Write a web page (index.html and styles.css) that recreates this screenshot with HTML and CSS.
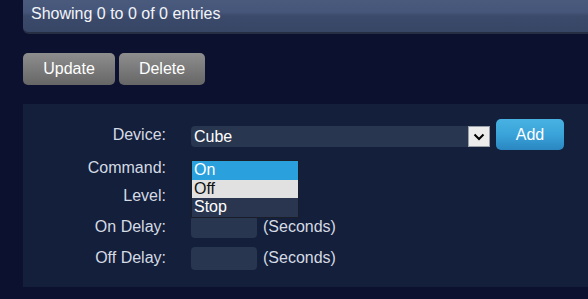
FILE: index.html
```html
<!DOCTYPE html>
<html>
<head>
<meta charset="utf-8">
<link rel="stylesheet" href="styles.css">
</head>
<body>
<div class="info-bar">Showing 0 to 0 of 0 entries</div>
<div class="actions">
  <button class="btn gray update">Update</button>
  <button class="btn gray delete">Delete</button>
</div>
<div class="panel">
  <div class="form">
    <div class="label">Device:</div>
    <div class="field">
      <div class="select">
        <span class="select-text">Cube</span>
        <span class="arrow"><svg width="12" height="8" viewBox="0 0 12 8"><path d="M1.5 1.5 L6 6 L10.5 1.5" fill="none" stroke="#000" stroke-width="2"/></svg></span>
      </div>
      <button class="btn blue">Add</button>
    </div>
    <div class="label">Command:</div>
    <div class="field cmd">
      <div class="listbox">
        <div class="opt sel">On</div>
        <div class="opt hov">Off</div>
        <div class="opt">Stop</div>
      </div>
    </div>
    <div class="label level">Level:</div>
    <div class="field"></div>
    <div class="label">On Delay:</div>
    <div class="field"><span class="input"></span><span class="unit">(Seconds)</span></div>
    <div class="label">Off Delay:</div>
    <div class="field"><span class="input"></span><span class="unit">(Seconds)</span></div>
  </div>
</div>
</body>
</html>
```
FILE: styles.css
```css
html, body {
  margin: 0;
  padding: 0;
  background: #0c1130;
  font-family: "Liberation Sans", Arial, sans-serif;
  font-size: 16px;
  overflow: hidden;
}
.info-bar {
  margin-left: 23px;
  height: 34px;
  box-sizing: border-box;
  padding: 4px 0 0 8px;
  color: #f2f4f8;
  background: linear-gradient(#4a5a7c 0px, #46567a 12px, #3b4a6a 16px, #384666 32px);
  border-bottom: 2px solid #262e44;
  border-bottom-left-radius: 6px;
  line-height: 20px;
}
.actions {
  display: flex;
  gap: 4px;
  margin: 19px 0 0 23px;
}
.btn {
  border: none;
  font-family: inherit;
  font-size: 16px;
  color: #fff;
  border-radius: 5px;
  padding: 0;
}
.gray {
  height: 32px;
  background: linear-gradient(#8e8e8e, #7a7a7a 50%, #666 100%);
}
.update { width: 92px; }
.delete { width: 86px; }
.panel {
  margin: 19px 0 0 23px;
  height: 183px;
  background: #131f3b;
}
.form {
  display: grid;
  grid-template-columns: 143px 1fr;
  grid-template-rows: 31px 35px 26px 31px 32px;
  column-gap: 25px;
  padding-top: 15px;
}
.label {
  color: #d5dae3;
  text-align: right;
  align-self: center;
}
.label.level { margin-bottom: 4px; }
.field {
  display: flex;
  align-items: center;
}
.select {
  align-self: flex-start;
  margin-top: 7px;
  width: 299px;
  height: 21px;
  background: #29364f;
  border-radius: 4px 0 0 4px;
  display: flex;
  align-items: center;
  justify-content: space-between;
}
.select-text {
  color: #fff;
  padding-left: 3px;
}
.arrow {
  width: 20px;
  height: 19px;
  background: #ececec;
  border: 1px solid #9aa0a8;
  display: flex;
  align-items: center;
  justify-content: center;
}
.blue {
  margin-left: 6px;
  width: 68px;
  height: 31px;
  background: linear-gradient(#47b2e2, #3aa3d9 50%, #2a86c1 100%);
}
.cmd { position: relative; }
.listbox {
  position: absolute;
  left: 0;
  top: 10px;
  width: 106px;
  border: 1px solid #1a1e28;
  background: #2a3650;
  z-index: 2;
}
.opt {
  height: 18.5px;
  line-height: 18px;
  padding-left: 2px;
  color: #fff;
}
.opt.sel { background: #2aa0dc; }
.opt.hov { background: #e1e1e1; color: #111; }
.input {
  width: 66px;
  height: 23px;
  background: #29364f;
  border-radius: 4px;
}
.unit {
  color: #d5dae3;
  margin-left: 6px;
}
```
